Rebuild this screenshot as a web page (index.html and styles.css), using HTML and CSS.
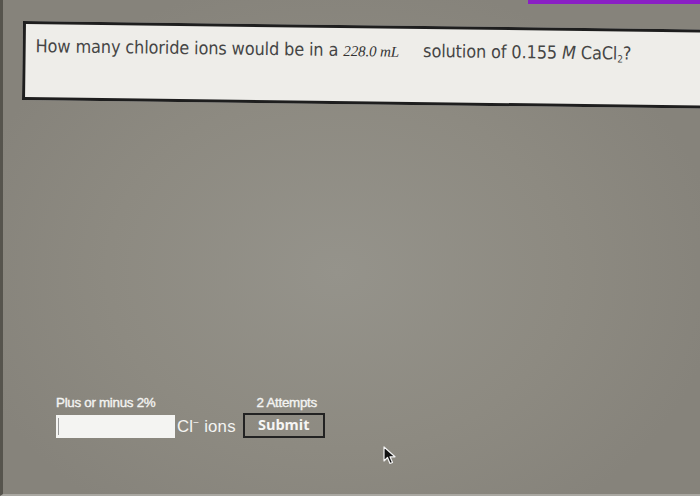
FILE: index.html
```html
<!DOCTYPE html>
<html>
<head>
<meta charset="utf-8">
<link rel="stylesheet" href="styles.css">
</head>
<body>
<div class="screen">
  <div class="topbar"><div class="accent"></div></div>
  <div class="question">
    <p class="qtext">How many chloride ions would be in a <span class="qty">228.0 mL</span> <span class="gap"></span>solution of 0.155 <span class="unit">M</span> CaCl<sub>2</sub>?</p>
  </div>
  <div class="answer">
    <div class="field">
      <div class="label">Plus or minus 2%</div>
      <div class="inputrow">
        <div class="input"><span class="caret"></span></div>
        <span class="units">Cl<sup>&minus;</sup> ions</span>
      </div>
    </div>
    <div class="submitgroup">
      <div class="label attempts">2 Attempts</div>
      <div class="submit">Submit</div>
    </div>
  </div>
  <svg class="cursor" width="14" height="20" viewBox="0 0 14 20"><path d="M1 1 L1 15 L4.5 11.5 L7 17.5 L9.5 16.5 L7 10.8 L12 10.8 Z" fill="#111" stroke="#f4f4f4" stroke-width="1.2" stroke-linejoin="round"/></svg>
</div>
</body>
</html>
```
FILE: styles.css
```css
html, body {
  margin: 0;
  padding: 0;
}
body {
  width: 700px;
  height: 496px;
  overflow: hidden;
  background: #8b8980;
}
.screen {
  position: relative;
  width: 697px;
  height: 494px;
  border-left: 3px solid #56544d;
  border-bottom: 2px solid #a9a7a1;
  background: radial-gradient(ellipse 55% 60% at 48% 55%, #95938b 0%, #8d8a81 60%, #86837b 100%);
  overflow: hidden;
  font-family: "Liberation Sans", Arial, sans-serif;
}
.topbar {
  height: 4px;
  display: flex;
}
.accent {
  margin-left: auto;
  width: 172px;
  height: 4px;
  background: #8a1fc4;
}
.question {
  margin: 17px 0 0 20px;
  width: 700px;
  height: 73px;
  border: 3px solid #1e1e1e;
  background: #eeede9;
  transform: rotate(0.72deg);
  transform-origin: left top;
  box-sizing: content-box;
}
.qtext {
  margin: 11px 0 0 10px;
  font-family: "DejaVu Sans Condensed", "DejaVu Sans", sans-serif;
  font-size: 17.9px;
  color: #454545;
  white-space: nowrap;
  letter-spacing: -0.1px;
}
.qty {
  font-family: "Liberation Serif", "Times New Roman", serif;
  font-style: italic;
  font-size: 15px;
  color: #333;
}
.gap {
  display: inline-block;
  width: 19px;
}
.unit {
  font-style: italic;
  font-family: "DejaVu Sans Condensed", sans-serif;
}
sub {
  font-size: 10px;
  vertical-align: -3px;
}
.answer {
  display: flex;
  align-items: flex-end;
  gap: 7px;
  margin: 295px 0 0 53px;
}
.field {
  display: flex;
  flex-direction: column;
  gap: 5px;
}
.label {
  font-size: 13.4px;
  font-weight: 400;
  color: #f4f4f2;
  letter-spacing: -0.3px;
  -webkit-text-stroke: 0.35px #f4f4f2;
}
.inputrow {
  display: flex;
  align-items: center;
  gap: 2px;
}
.input {
  width: 119px;
  height: 23px;
  background: #f4f4f2;
  display: flex;
  align-items: center;
  padding-left: 2px;
  box-sizing: border-box;
}
.caret {
  width: 1px;
  height: 17px;
  background: #999;
}
.units {
  font-size: 16.8px;
  color: #f4f4f2;
  letter-spacing: 0.2px;
}
.units sup {
  font-size: 10px;
  vertical-align: 6px;
}
.submitgroup {
  display: flex;
  flex-direction: column;
  align-items: center;
  gap: 3px;
}
.attempts {
  padding-left: 6px;
}
.submit {
  width: 82px;
  height: 25px;
  box-sizing: border-box;
  border: 2px solid #222;
  display: flex;
  align-items: center;
  justify-content: center;
  font-family: "Open Sans", sans-serif;
  font-weight: 700;
  font-size: 14.5px;
  color: #f6f6f4;
  padding-bottom: 2px;
}
.cursor {
  position: absolute;
  left: 380px;
  top: 446px;
}
```
